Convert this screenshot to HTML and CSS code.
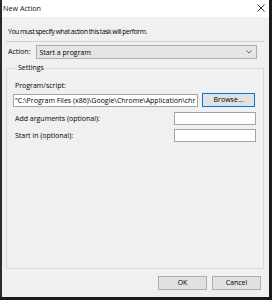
FILE: index.html
```html
<!doctype html>
<html lang="en">
  <head>
    <meta charset="UTF-8" />
    <title>New Action</title>
    <link rel="stylesheet" href="styles.css">
  </head>
  <body>
    <div class="window">
      <div class="titlebar">
        <span class="title">New Action</span>
        <svg class="close-icon" width="8" height="8" viewBox="0 0 8 8">
          <path d="M0.5 0.5 L7.5 7.5 M7.5 0.5 L0.5 7.5" stroke="#1a1a1a" stroke-width="0.9" fill="none" />
        </svg>
      </div>

      <div class="content">
        <p class="intro">You must specify what action this task will perform.</p>
        <div class="separator"></div>

        <div class="action-row">
          <span class="label">Action:</span>
          <div class="combo">
            <span>Start a program</span>
            <svg width="6" height="4" viewBox="0 0 6 4">
              <path d="M0.5 0.5 L3 3 L5.5 0.5" stroke="#444" stroke-width="0.8" fill="none" />
            </svg>
          </div>
        </div>

        <fieldset class="group">
          <legend>Settings</legend>
          <div class="label program-label">Program/script:</div>
          <div class="program-row">
            <div class="text-field wide">
              <span>"C:\Program Files (x86)\Google\Chrome\Application\chr</span>
            </div>
            <button class="btn default">Browse...</button>
          </div>
          <div class="field-row first">
            <span class="label">Add arguments (optional):</span>
            <div class="text-field short"></div>
          </div>
          <div class="field-row">
            <span class="label">Start in (optional):</span>
            <div class="text-field short"></div>
          </div>
        </fieldset>
      </div>

      <div class="footer">
        <button class="btn">OK</button>
        <button class="btn">Cancel</button>
      </div>
    </div>
  </body>
</html>
```

FILE: styles.css
```css
body {
  margin: 0;
  font-family: "Open Sans", "Noto Sans", sans-serif;
  font-size: 7px;
  color: #000;
  background: #1b1b1b;
}

.window {
  width: 272px;
  height: 300px;
  box-sizing: border-box;
  border-left: 2px solid #2a2a2a;
  border-right: 3px solid #1b1b1b;
  border-bottom: 3px solid #1b1b1b;
  background: #f0f0f0;
  display: flex;
  flex-direction: column;
}

.titlebar {
  height: 17px;
  flex-shrink: 0;
  background: #fff;
  display: flex;
  align-items: center;
  justify-content: space-between;
  padding: 0 4px 0 1px;
}

.title {
  font-size: 7.2px;
  color: #111;
  margin-top: -1px;
}

.close-icon {
  margin-top: -2px;
}

.content {
  flex: 1;
  display: flex;
  flex-direction: column;
  padding: 10px 5px 0 4px;
}

.intro {
  margin: 0 0 0 2px;
  line-height: 10px;
  font-size: 6.8px;
  letter-spacing: -0.4px;
  word-spacing: -0.3px;
}

.separator {
  height: 1px;
  margin-top: 4px;
  background: #d2d2d2;
}

.label {
  line-height: 10px;
  white-space: nowrap;
}

.action-row {
  display: flex;
  align-items: center;
  margin-top: 3px;
  padding-left: 2px;
}

.combo {
  width: 221px;
  height: 14px;
  box-sizing: border-box;
  margin-left: 6px;
  border: 1px solid #adadad;
  background: #e5e5e5;
  display: flex;
  align-items: center;
  justify-content: space-between;
  padding: 0 4px 0 2px;
}

.group {
  flex: 1;
  margin: 4px 0 0;
  padding: 0 7px 0 6px;
  border: 1px solid #d8d8d8;
  min-width: 0;
}

.group legend {
  padding: 0 1px;
  margin-left: 4px;
  line-height: 10px;
}

.program-label {
  margin-top: 8px;
  padding-left: 2px;
}

.program-row {
  display: flex;
  align-items: center;
  gap: 4px;
  margin-top: 2px;
}

.text-field {
  height: 13px;
  box-sizing: border-box;
  border: 1px solid #a3a3a3;
  background: #fff;
  overflow: hidden;
  white-space: nowrap;
  line-height: 11px;
}

.text-field.wide {
  width: 185px;
  padding-left: 1px;
}

.text-field.short {
  width: 82px;
}

.field-row {
  display: flex;
  align-items: center;
  justify-content: space-between;
  padding-left: 2px;
  margin-top: 4px;
}

.field-row.first {
  margin-top: 5px;
}

.btn {
  height: 14px;
  box-sizing: border-box;
  padding: 0;
  border: 1px solid #adadad;
  background: #e1e1e1;
  font-family: inherit;
  font-size: 7px;
  color: #000;
  line-height: 12px;
}

.btn.default {
  width: 53px;
  border-color: #0078d7;
}

.footer {
  flex-shrink: 0;
  display: flex;
  justify-content: flex-end;
  gap: 5px;
  padding: 7px 8px 7px 0;
}

.footer .btn {
  width: 49px;
}
```
